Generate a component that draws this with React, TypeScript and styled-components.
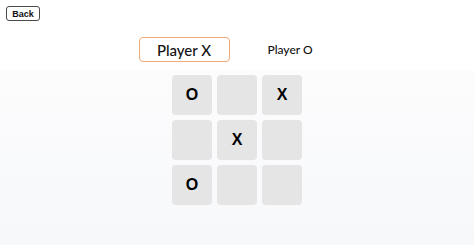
import React from 'react';
import styled, { createGlobalStyle } from 'styled-components';

const GlobalStyle = createGlobalStyle`
  html, body {
    margin: 0;
    padding: 0;
    background: #ffffff;
  }
  body {
    font-family: "Liberation Sans", Arial, sans-serif;
  }
`;

const Page = styled.div`
  display: flex;
  flex-direction: column;
  width: 474px;
  height: 245px;
  overflow: hidden;
`;

const TopBar = styled.div`
  display: flex;
  padding: 6px 0 0 6px;
  height: 37px;
  box-sizing: border-box;
`;

const BackButton = styled.button`
  width: 34px;
  height: 15px;
  padding: 0;
  border: 1px solid #4a4a4a;
  border-radius: 3px;
  background: #ffffff;
  font-family: "Liberation Sans", Arial, sans-serif;
  font-size: 9px;
  font-weight: 700;
  color: #111111;
  cursor: pointer;
`;

const Players = styled.div`
  display: flex;
  justify-content: center;
  gap: 15px;
`;

const PlayerButton = styled.button<{ $active?: boolean }>`
  width: 91px;
  height: 25px;
  padding: 0;
  border: 1.5px solid ${(p) => (p.$active ? '#f4aa78' : 'transparent')};
  border-radius: 4px;
  background: #ffffff;
  font-family: "Lato", "Liberation Sans", sans-serif;
  font-size: ${(p) => (p.$active ? '15px' : '12px')};
  font-weight: 500;
  color: #111111;
  cursor: pointer;
`;

const Board = styled.div`
  margin-top: 8px;
  flex: 1;
  display: flex;
  justify-content: center;
  padding-top: 5px;
  background: linear-gradient(#fcfcfd, #f7f8fa);
`;

const Grid = styled.div`
  display: grid;
  grid-template-columns: repeat(3, 40px);
  grid-auto-rows: 40px;
  gap: 5px;
  align-content: start;
`;

const Cell = styled.div`
  display: flex;
  align-items: center;
  justify-content: center;
  border-radius: 4px;
  background: #e5e5e5;
  font-family: "Liberation Sans", Arial, sans-serif;
  font-weight: 700;
  font-size: 16px;
  color: #000000;
`;

const cells = ['O', '', 'X', '', 'X', '', 'O', '', ''];

export default function App() {
  return (
    <Page>
      <GlobalStyle />
      <TopBar>
        <BackButton>Back</BackButton>
      </TopBar>
      <Players>
        <PlayerButton $active>Player X</PlayerButton>
        <PlayerButton>Player O</PlayerButton>
      </Players>
      <Board>
        <Grid>
          {cells.map((c, i) => (
            <Cell key={i}>{c}</Cell>
          ))}
        </Grid>
      </Board>
    </Page>
  );
}
